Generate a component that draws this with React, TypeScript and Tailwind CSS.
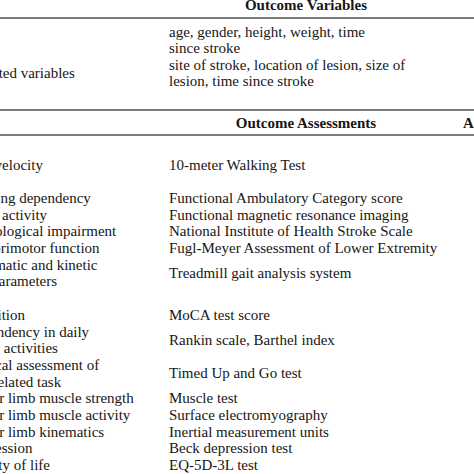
import React from "react";

type Row = { left: string[]; right: string[] } | null;

const variableRows: Row[] = [
  { left: [], right: ["age, gender, height, weight, time", "since stroke"] },
  { left: ["Stroke-related variables"], right: ["site of stroke, location of lesion, size of", "lesion, time since stroke"] },
];

const assessmentRows: Row[] = [
  { left: ["Gait velocity"], right: ["10-meter Walking Test"] },
  null,
  { left: ["Walking dependency"], right: ["Functional Ambulatory Category score"] },
  { left: ["Brain activity"], right: ["Functional magnetic resonance imaging"] },
  { left: ["Neurological impairment"], right: ["National Institute of Health Stroke Scale"] },
  { left: ["Sensorimotor function"], right: ["Fugl-Meyer Assessment of Lower Extremity"] },
  { left: ["Kinematic and kinetic", "gait parameters"], right: ["Treadmill gait analysis system"] },
  null,
  { left: ["Cognition"], right: ["MoCA test score"] },
  { left: ["Dependency in daily", "living activities"], right: ["Rankin scale, Barthel index"] },
  { left: ["Clinical assessment of", "gait-related task"], right: ["Timed Up and Go test"] },
  { left: ["Lower limb muscle strength"], right: ["Muscle test"] },
  { left: ["Lower limb muscle activity"], right: ["Surface electromyography"] },
  { left: ["Lower limb kinematics"], right: ["Inertial measurement units"] },
  { left: ["Depression"], right: ["Beck depression test"] },
  { left: ["Quality of life"], right: ["EQ-5D-3L test"] },
];

const Rule: React.FC = () => <div className="h-[2px] w-full bg-[#7c7c7c]" />;

const Lines: React.FC<{ lines: string[] }> = ({ lines }) => (
  <div className="whitespace-nowrap">
    {lines.map((t, i) => (
      <div key={i}>{t}</div>
    ))}
  </div>
);

const App: React.FC = () => {
  return (
    <div
      className="w-[474px] h-[474px] overflow-hidden bg-white text-[15px] text-[#161616]"
      style={{ fontFamily: '"Liberation Serif", "Times New Roman", serif' }}
    >
      {/* Outcome Variables header */}
      <div className="h-[17px] flex items-end pb-[4px]">
        <div className="ml-[169px] w-[274px] text-center font-bold leading-[16px] whitespace-nowrap">
          Outcome Variables
        </div>
      </div>
      <Rule />

      <div className="h-[90px] pt-[5px] leading-[16.4px] -ml-[68px]">
        {variableRows.map((row, i) =>
          row ? (
            <div key={i} className="grid grid-cols-[237px_274px_1fr] items-center">
              <Lines lines={row.left} />
              <Lines lines={row.right} />
              <div />
            </div>
          ) : null
        )}
      </div>
      <Rule />

      {/* Outcome Assessments header */}
      <div className="h-[23px] flex items-center font-bold leading-[16px] whitespace-nowrap">
        <div className="ml-[169px] w-[274px] shrink-0 text-center">Outcome Assessments</div>
        <div className="pl-[20px] shrink-0">Assessment time</div>
      </div>
      <Rule />

      <div className="pt-[20.5px] leading-[16.7px] -ml-[35px]">
        {assessmentRows.map((row, i) =>
          row ? (
            <div key={i} className="grid grid-cols-[204px_274px_1fr] items-center">
              <Lines lines={row.left} />
              <Lines lines={row.right} />
              <div />
            </div>
          ) : (
            <div key={i} className="h-[16.7px]" />
          )
        )}
      </div>
    </div>
  );
};

export default App;
